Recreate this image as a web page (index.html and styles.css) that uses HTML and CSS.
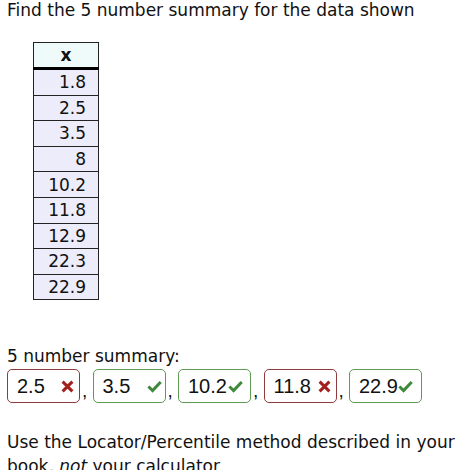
FILE: index.html
```html
<!DOCTYPE html>
<html>
<head>
<meta charset="utf-8">
<link rel="stylesheet" href="styles.css">
</head>
<body>
<div class="page">
  <p class="prompt">Find the 5 number summary for the data shown</p>
  <table class="data">
    <thead><tr><th>x</th></tr></thead>
    <tbody>
      <tr><td>1.8</td></tr>
      <tr><td>2.5</td></tr>
      <tr><td>3.5</td></tr>
      <tr><td>8</td></tr>
      <tr><td>10.2</td></tr>
      <tr><td>11.8</td></tr>
      <tr><td>12.9</td></tr>
      <tr><td>22.3</td></tr>
      <tr><td>22.9</td></tr>
    </tbody>
  </table>
  <p class="label">5 number summary:</p>
  <div class="answers">
    <span class="box wrong"><span class="val">2.5</span><svg class="mark" viewBox="0 0 12 12"><path d="M1.5 1.5 L10.5 10.5 M10.5 1.5 L1.5 10.5" stroke="#a3201f" stroke-width="2.8"/></svg></span><span class="sep">,</span>
    <span class="box right"><span class="val">3.5</span><svg class="mark check" viewBox="0 0 14 12"><path d="M1.3 6 L5.2 9.8 L12.8 1.8" fill="none" stroke="#3f8a3a" stroke-width="2.8"/></svg></span><span class="sep">,</span>
    <span class="box right tight"><span class="val">10.2</span><svg class="mark check" viewBox="0 0 14 12"><path d="M1.3 6 L5.2 9.8 L12.8 1.8" fill="none" stroke="#3f8a3a" stroke-width="2.8"/></svg></span><span class="sep">,</span>
    <span class="box wrong"><span class="val">11.8</span><svg class="mark" viewBox="0 0 12 12"><path d="M1.5 1.5 L10.5 10.5 M10.5 1.5 L1.5 10.5" stroke="#a3201f" stroke-width="2.8"/></svg></span><span class="sep">,</span>
    <span class="box right tighter"><span class="val">22.9</span><svg class="mark check" viewBox="0 0 14 12"><path d="M1.3 6 L5.2 9.8 L12.8 1.8" fill="none" stroke="#3f8a3a" stroke-width="2.8"/></svg></span>
  </div>
  <p class="note">Use the Locator/Percentile method described in your book, <em>not</em> your calculator</p>
</div>
</body>
</html>
```
FILE: styles.css
```css
html, body {
  margin: 0;
  padding: 0;
  background: #fff;
}
.page {
  padding: 0 0 0 7px;
  font-family: "DejaVu Sans", Verdana, sans-serif;
  font-size: 17px;
  color: #111;
}
.prompt {
  margin: 0;
  line-height: 20px;
}
.data {
  margin: 22px 0 0 26px;
  border-collapse: collapse;
  width: 66px;
}
.data th {
  background: #effbfb;
  border: 1px solid #222;
  border-bottom: 3px solid #000;
  font-weight: bold;
  height: 24px;
  padding: 0;
  line-height: 20px;
  text-align: center;
}
.data td {
  background: #ececfa;
  border: 1px solid #222;
  height: 24.6px;
  padding: 0 12px 0 0;
  text-align: right;
  line-height: 20px;
}
.label {
  margin: 46px 0 0;
  line-height: 20px;
}
.answers {
  display: flex;
  align-items: flex-end;
  margin-top: 3px;
}
.box {
  display: flex;
  align-items: center;
  box-sizing: border-box;
  width: 73px;
  height: 34px;
  border-radius: 5px;
  padding: 0 0 0 9px;
  font-family: "Liberation Sans", Arial, sans-serif;
  font-size: 20px;
  color: #111;
}
.box.wrong { border: 1px solid #8e3a3e; }
.box.right { border: 1px solid #5f9a55; }
.box .val { width: 44px; }
.box.tight .val { width: 40px; }
.box.tighter .val { width: 39px; }
.mark {
  width: 13px;
  height: 13px;
}
.mark.check {
  width: 15px;
  height: 13px;
}
.sep {
  font-family: "Liberation Sans", Arial, sans-serif;
  font-size: 19px;
  width: 12.5px;
  padding-left: 2px;
  box-sizing: border-box;
  line-height: 24px;
}
.note {
  margin: 27px 0 0;
  line-height: 24px;
  width: 466px;
}
```
